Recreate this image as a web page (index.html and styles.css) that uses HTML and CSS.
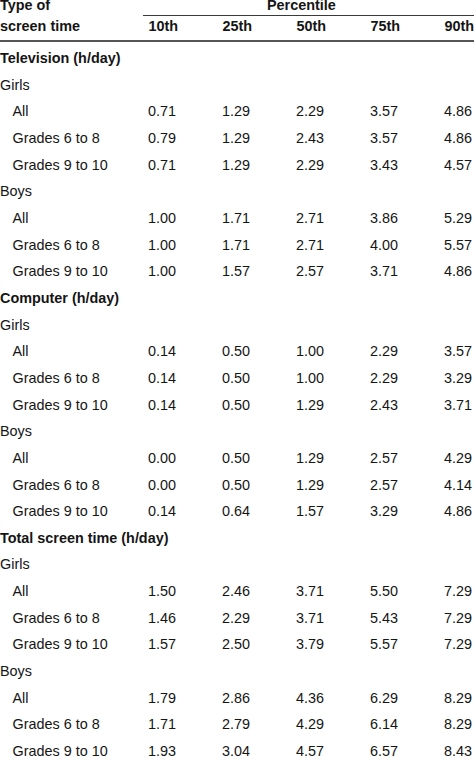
FILE: index.html
```html
<!DOCTYPE html>
<html lang="en">
<head>
<meta charset="utf-8">
<title>Screen time percentiles</title>
<link rel="stylesheet" href="styles.css">
</head>
<body>
<div class="sheet">
  <div class="head">
    <div class="head-type">Type of<br>screen time</div>
    <div class="head-pct">
      <div class="pct-title">Percentile</div>
      <div class="pct-cols"><span>10th</span><span>25th</span><span>50th</span><span>75th</span><span>90th</span></div>
    </div>
  </div>
  <div class="body">
    <div class="row section"><span>Television (h/day)</span></div>
    <div class="row group"><span>Girls</span></div>
    <div class="row item"><span class="lbl">All</span><span>0.71</span><span>1.29</span><span>2.29</span><span>3.57</span><span>4.86</span></div>
    <div class="row item"><span class="lbl">Grades 6 to 8</span><span>0.79</span><span>1.29</span><span>2.43</span><span>3.57</span><span>4.86</span></div>
    <div class="row item"><span class="lbl">Grades 9 to 10</span><span>0.71</span><span>1.29</span><span>2.29</span><span>3.43</span><span>4.57</span></div>
    <div class="row group"><span>Boys</span></div>
    <div class="row item"><span class="lbl">All</span><span>1.00</span><span>1.71</span><span>2.71</span><span>3.86</span><span>5.29</span></div>
    <div class="row item"><span class="lbl">Grades 6 to 8</span><span>1.00</span><span>1.71</span><span>2.71</span><span>4.00</span><span>5.57</span></div>
    <div class="row item"><span class="lbl">Grades 9 to 10</span><span>1.00</span><span>1.57</span><span>2.57</span><span>3.71</span><span>4.86</span></div>
    <div class="row section"><span>Computer (h/day)</span></div>
    <div class="row group"><span>Girls</span></div>
    <div class="row item"><span class="lbl">All</span><span>0.14</span><span>0.50</span><span>1.00</span><span>2.29</span><span>3.57</span></div>
    <div class="row item"><span class="lbl">Grades 6 to 8</span><span>0.14</span><span>0.50</span><span>1.00</span><span>2.29</span><span>3.29</span></div>
    <div class="row item"><span class="lbl">Grades 9 to 10</span><span>0.14</span><span>0.50</span><span>1.29</span><span>2.43</span><span>3.71</span></div>
    <div class="row group"><span>Boys</span></div>
    <div class="row item"><span class="lbl">All</span><span>0.00</span><span>0.50</span><span>1.29</span><span>2.57</span><span>4.29</span></div>
    <div class="row item"><span class="lbl">Grades 6 to 8</span><span>0.00</span><span>0.50</span><span>1.29</span><span>2.57</span><span>4.14</span></div>
    <div class="row item"><span class="lbl">Grades 9 to 10</span><span>0.14</span><span>0.64</span><span>1.57</span><span>3.29</span><span>4.86</span></div>
    <div class="row section"><span>Total screen time (h/day)</span></div>
    <div class="row group"><span>Girls</span></div>
    <div class="row item"><span class="lbl">All</span><span>1.50</span><span>2.46</span><span>3.71</span><span>5.50</span><span>7.29</span></div>
    <div class="row item"><span class="lbl">Grades 6 to 8</span><span>1.46</span><span>2.29</span><span>3.71</span><span>5.43</span><span>7.29</span></div>
    <div class="row item"><span class="lbl">Grades 9 to 10</span><span>1.57</span><span>2.50</span><span>3.79</span><span>5.57</span><span>7.29</span></div>
    <div class="row group"><span>Boys</span></div>
    <div class="row item"><span class="lbl">All</span><span>1.79</span><span>2.86</span><span>4.36</span><span>6.29</span><span>8.29</span></div>
    <div class="row item"><span class="lbl">Grades 6 to 8</span><span>1.71</span><span>2.79</span><span>4.29</span><span>6.14</span><span>8.29</span></div>
    <div class="row item"><span class="lbl">Grades 9 to 10</span><span>1.93</span><span>3.04</span><span>4.57</span><span>6.57</span><span>8.43</span></div>
  </div>
</div>
</body>
</html>
```
FILE: styles.css
```css
html, body {
  margin: 0;
  padding: 0;
  background: #ffffff;
}

body {
  width: 474px;
  height: 760px;
  overflow: hidden;
  font-family: "Liberation Sans", Arial, sans-serif;
  font-size: 14.4px;
  color: #151515;
}

.sheet {
  width: 474px;
  overflow: hidden;
  margin-top: -5.2px;
}

.head {
  display: grid;
  grid-template-columns: 143px 1fr;
  line-height: 21px;
  font-weight: bold;
  padding-bottom: 3.2px;
  border-bottom: 2px solid #555555;
}

.head-pct {
  display: flex;
  flex-direction: column;
}

.pct-title {
  height: 20px;
  padding-left: 124px;
  border-bottom: 1px solid #3a3a3a;
  white-space: nowrap;
}

.pct-cols {
  display: grid;
  grid-template-columns: repeat(5, 74px);
  padding-left: 5.5px;
  white-space: nowrap;
}

.body {
  padding-top: 3px;
}

.row {
  display: grid;
  grid-template-columns: 148px repeat(5, 74px);
  height: 26.67px;
  line-height: 26.67px;
  white-space: nowrap;
}

.section {
  font-weight: bold;
}

.item .lbl {
  padding-left: 12.5px;
}
```
